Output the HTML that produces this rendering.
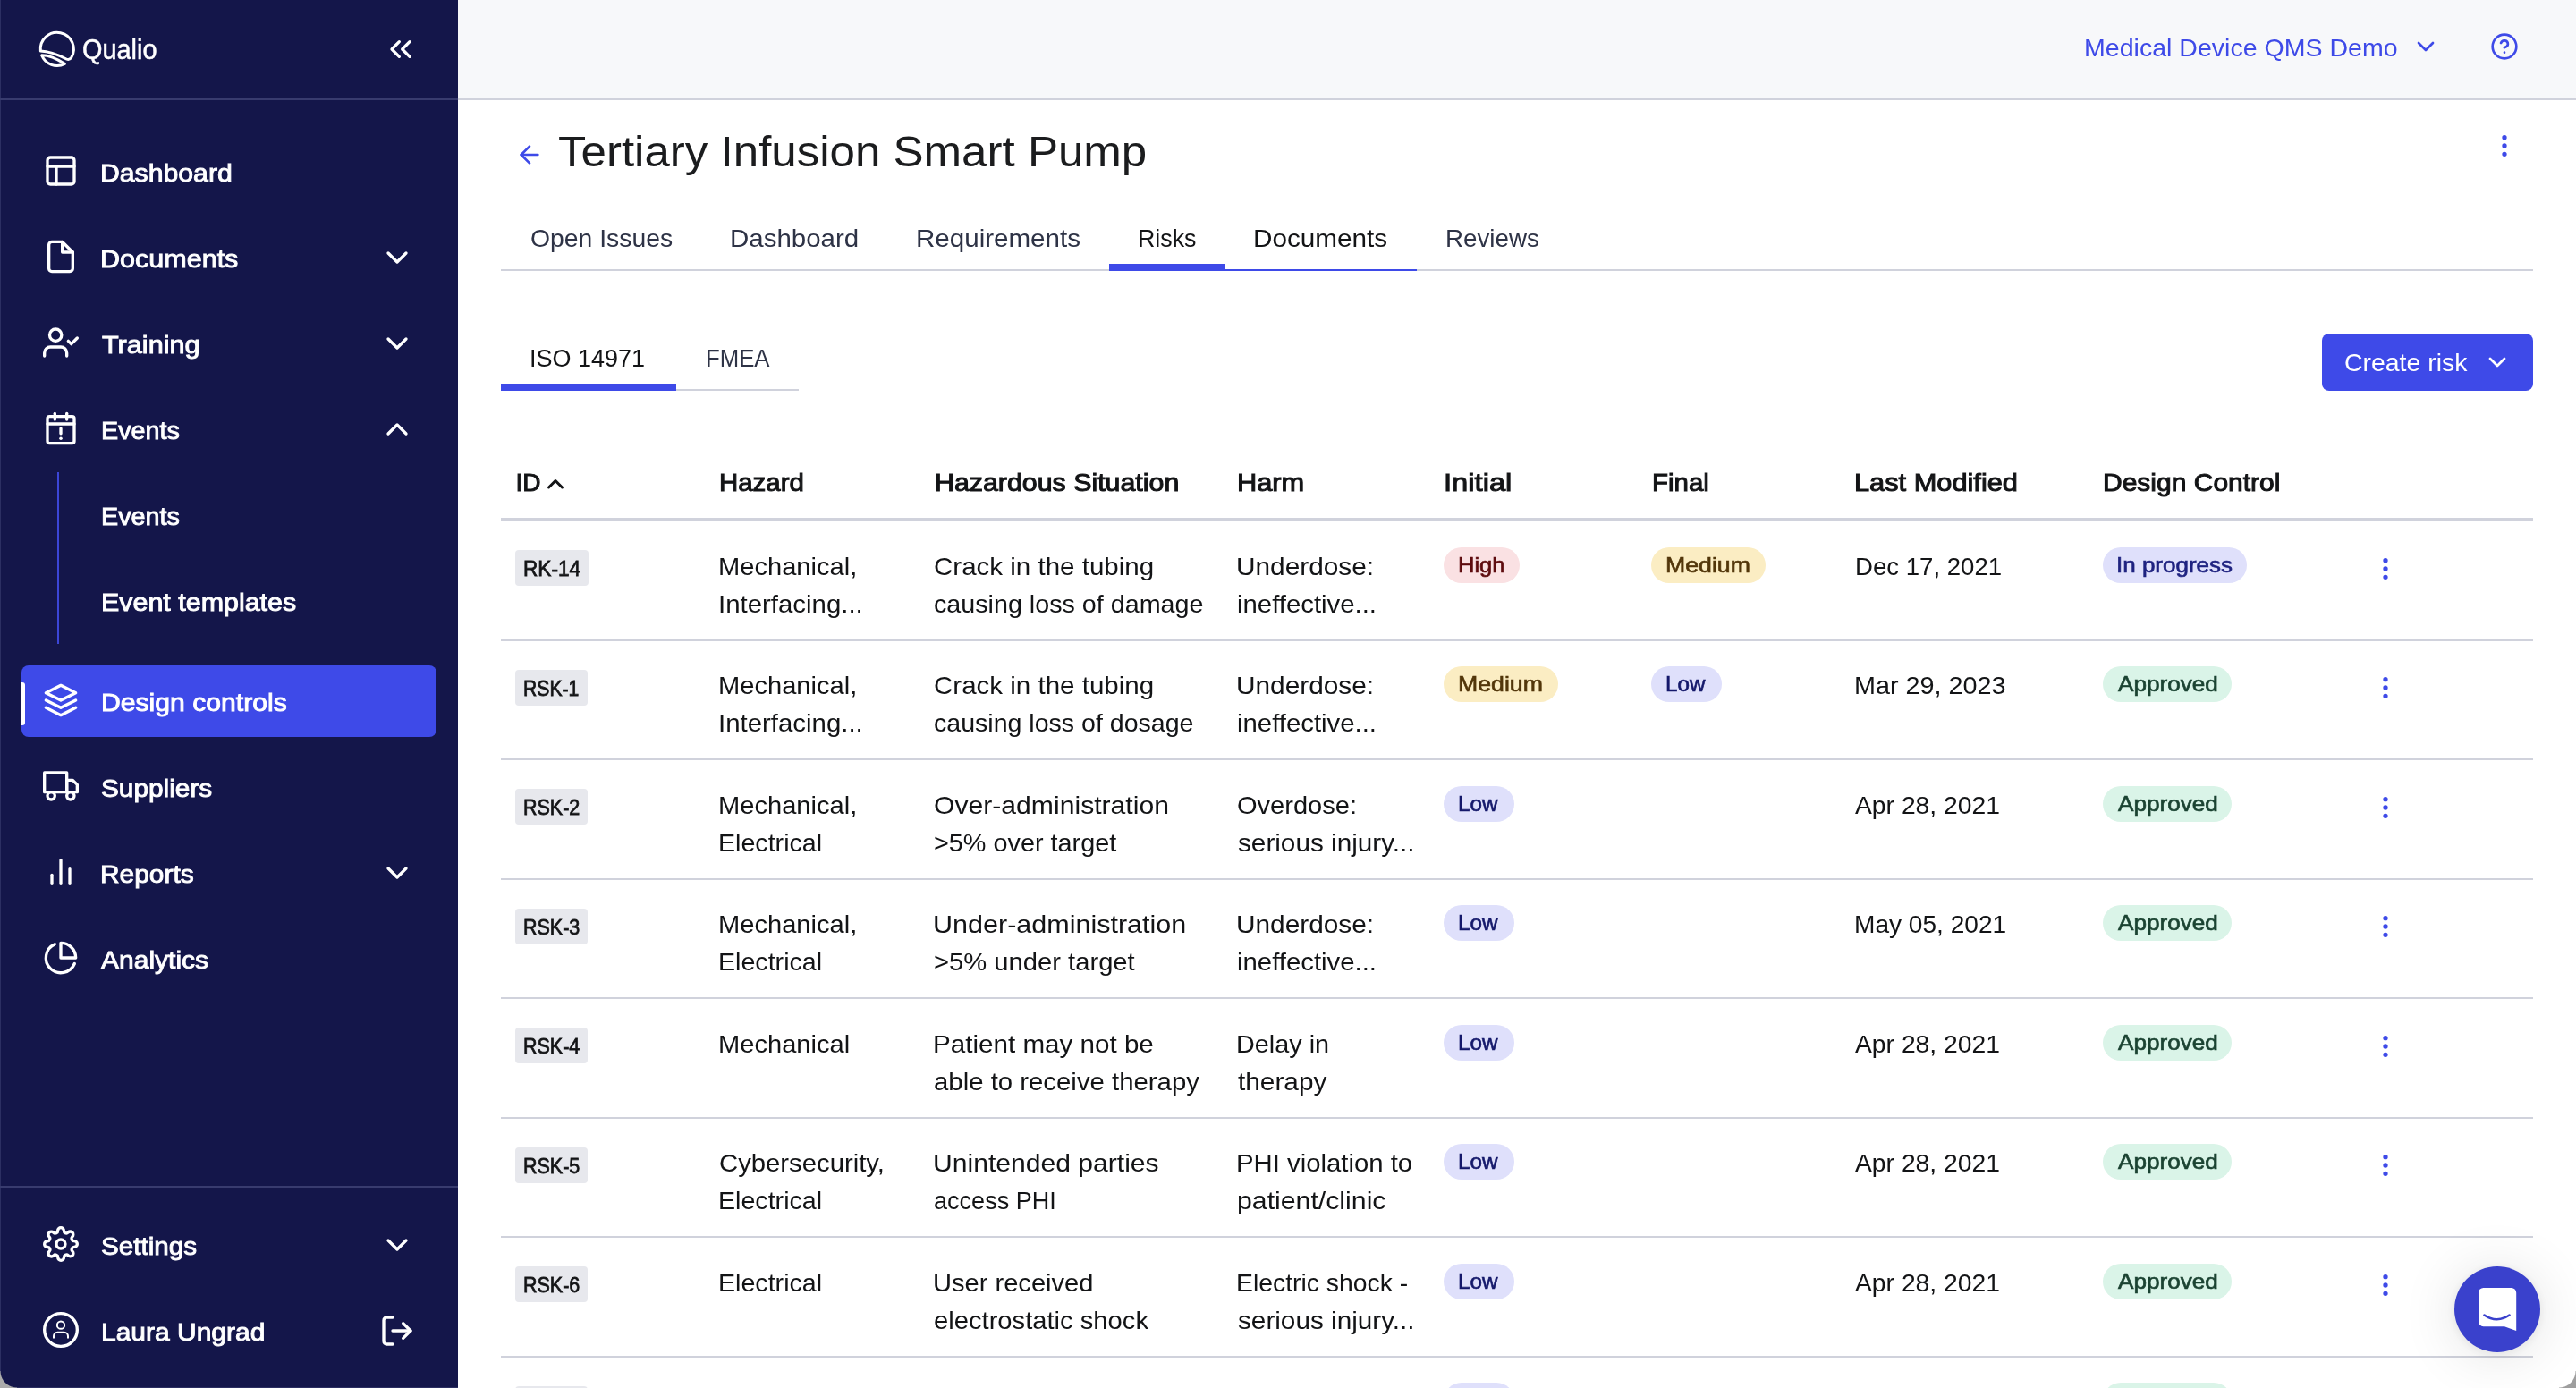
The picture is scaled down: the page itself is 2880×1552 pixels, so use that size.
<!DOCTYPE html><html lang="en"><head><meta charset="utf-8"><title>Tertiary Infusion Smart Pump - Risks</title><style>
*{margin:0;padding:0;box-sizing:border-box}
html,body{width:2880px;height:1552px;overflow:hidden;background:#fff}
body{position:relative;font-family:"Liberation Sans", sans-serif;-webkit-font-smoothing:antialiased}
@media (max-width:1600px){html{zoom:.5}}
.t{position:absolute;white-space:nowrap;font-weight:400;display:block;transform-origin:0 50%}
.i{position:absolute;display:block;overflow:visible}
aside{position:absolute;left:0;top:0;width:512px;height:1552px;background:#14164A;will-change:transform;box-shadow:inset 1px 0 0 #2C2F62,inset 0 -1px 0 #2C2F62}
aside .hl{position:absolute;left:0;width:512px;height:2px;background:#383B6E}
aside .act{position:absolute;left:24px;top:744px;width:464px;height:80px;border-radius:8px;background:#3E4AE8}
aside .bar{position:absolute;left:24px;top:763px;width:4px;height:48px;border-radius:0 3px 3px 0;background:#fff}
aside .vl{position:absolute;left:64px;top:528px;width:2px;height:192px;background:#3C46D8}
header{position:absolute;left:512px;top:0;width:2368px;height:112px;background:#F7F8FA;border-bottom:2px solid #D0D2DC}
main{position:absolute;left:0;top:0;width:2880px;height:1552px;overflow:hidden;will-change:transform}
.ln{position:absolute;height:2px;background:#D0D2DC}
.bl{position:absolute;background:#3E4AE8}
.btn{position:absolute;left:2596px;top:373px;width:236px;height:64px;border-radius:8px;background:#3E4AE8}
.sep{position:absolute;left:560px;width:2272px;height:2px;background:#D0D2DC}
.idb{position:absolute;height:40px;border-radius:4px;background:#E7E8ED}
.pill{position:absolute;height:40px;border-radius:20px}
.cnr{position:absolute;bottom:0;width:19px;height:19px}
.chat{position:absolute;left:2744px;top:1416px;width:96px;height:96px;border-radius:50%;background:#3A41CC;box-shadow:0 2px 12px rgba(0,0,0,.08),0 4px 64px rgba(0,0,0,.12)}
</style></head><body>
<header></header>
<main>
<div class="btn"></div>
<svg class="i" style="left:2696px;top:36px" width="32" height="32" viewBox="0 0 24 24" fill="none" stroke="#3E4AE8" stroke-width="2" stroke-linecap="round" stroke-linejoin="round"><polyline points="6 9 12 15 18 9"/></svg>
<svg class="i" style="left:2784px;top:36px" width="32" height="32" viewBox="0 0 24 24" fill="none" stroke="#3E4AE8" stroke-width="2" stroke-linecap="round" stroke-linejoin="round"><circle cx="12" cy="12" r="10"/><path d="M9.090 9a3 3 0 0 1 5.830 1c0 2-3 3-3 3"/><line x1="12" y1="17" x2="12.010" y2="17"/></svg>
<svg class="i" style="left:576px;top:157px" width="32" height="32" viewBox="0 0 24 24" fill="none" stroke="#3E4AE8" stroke-width="2" stroke-linecap="round" stroke-linejoin="round"><line x1="19" y1="12" x2="5" y2="12"/><polyline points="12 19 5 12 12 5"/></svg>
<svg class="i" style="left:2784px;top:147px" width="32" height="32" viewBox="0 0 24 24" fill="#3E4AE8" stroke="#3E4AE8" stroke-width="2" stroke-linecap="round" stroke-linejoin="round"><circle cx="12" cy="5" r="1"/><circle cx="12" cy="12" r="1"/><circle cx="12" cy="19" r="1"/></svg>
<svg class="i" style="left:2776px;top:389px" width="32" height="32" viewBox="0 0 24 24" fill="none" stroke="#fff" stroke-width="2" stroke-linecap="round" stroke-linejoin="round"><polyline points="6 9 12 15 18 9"/></svg>
<svg class="i" style="left:608px;top:525px" width="26" height="32" viewBox="0 0 26 32" fill="none" stroke="#131416" stroke-width="3" stroke-linecap="round" stroke-linejoin="round"><polyline points="5.500 20 13 12.500 20.500 20"/></svg>
<span class="t" style="left:2330.06px;top:37.60px;font-size:28px;line-height:31px;color:#3E4AE8;transform:scaleX(1.0196);">Medical Device QMS Demo</span>
<h1 class="t" style="left:624.14px;top:143.20px;font-size:48px;line-height:53px;color:#1B1C1E;transform:scaleX(1.0636);">Tertiary Infusion Smart Pump</h1>
<span class="t" style="left:592.89px;top:251.40px;font-size:28px;line-height:31px;color:#2E3346;transform:scaleX(1.0122);">Open Issues</span>
<span class="t" style="left:816.30px;top:251.40px;font-size:28px;line-height:31px;color:#2E3346;transform:scaleX(1.0524);">Dashboard</span>
<span class="t" style="left:1024.49px;top:251.40px;font-size:28px;line-height:31px;color:#2E3346;transform:scaleX(1.0554);">Requirements</span>
<span class="t" style="left:1272.49px;top:251.40px;font-size:28px;line-height:31px;color:#131416;transform:scaleX(0.9566);">Risks</span>
<span class="t" style="left:1401.48px;top:251.40px;font-size:28px;line-height:31px;color:#131416;transform:scaleX(1.0605);">Documents</span>
<span class="t" style="left:1616.22px;top:251.40px;font-size:28px;line-height:31px;color:#2E3346;transform:scaleX(0.9902);">Reviews</span>
<span class="t" style="left:592.17px;top:385.20px;font-size:28px;line-height:31px;color:#131416;transform:scaleX(0.9627);">ISO 14971</span>
<span class="t" style="left:788.96px;top:385.20px;font-size:28px;line-height:31px;color:#2E3346;transform:scaleX(0.9198);">FMEA</span>
<span class="t" style="left:2621.08px;top:390.00px;font-size:28px;line-height:31px;color:#fff;transform:scaleX(1.0150);">Create risk</span>
<span class="t" style="left:576.50px;top:524.00px;font-size:28px;line-height:31px;color:#131416;-webkit-text-stroke:1.0px;">ID</span>
<span class="t" style="left:804.30px;top:524.00px;font-size:28px;line-height:31px;color:#131416;transform:scaleX(1.0509);-webkit-text-stroke:1.0px;">Hazard</span>
<span class="t" style="left:1044.53px;top:524.00px;font-size:28px;line-height:31px;color:#131416;transform:scaleX(1.0838);-webkit-text-stroke:1.0px;">Hazardous Situation</span>
<span class="t" style="left:1382.70px;top:524.00px;font-size:28px;line-height:31px;color:#131416;transform:scaleX(1.0996);-webkit-text-stroke:1.0px;">Harm</span>
<span class="t" style="left:1614.26px;top:524.00px;font-size:28px;line-height:31px;color:#131416;transform:scaleX(1.1682);-webkit-text-stroke:1.0px;">Initial</span>
<span class="t" style="left:1846.80px;top:524.00px;font-size:28px;line-height:31px;color:#131416;transform:scaleX(1.0510);-webkit-text-stroke:1.0px;">Final</span>
<span class="t" style="left:2073.30px;top:524.00px;font-size:28px;line-height:31px;color:#131416;transform:scaleX(1.0984);-webkit-text-stroke:1.0px;">Last Modified</span>
<span class="t" style="left:2350.96px;top:524.00px;font-size:28px;line-height:31px;color:#131416;transform:scaleX(1.0716);-webkit-text-stroke:1.0px;">Design Control</span>
<div class="ln" style="left:560px;top:301px;width:2272px"></div>
<div class="bl" style="left:1240px;top:295px;width:130px;height:8px"></div>
<div class="bl" style="left:1370px;top:301px;width:214px;height:2px"></div>
<div class="ln" style="left:560px;top:435px;width:333px"></div>
<div class="bl" style="left:560px;top:429px;width:196px;height:8px"></div>
<div class="ln" style="left:560px;top:579px;width:2272px;height:4px"></div>
<section class="row" id="row0"><div class="sep" style="top:715.0px"></div>
<div class="idb" style="left:576px;top:615px;width:82px"></div>
<div class="pill" style="left:1614px;top:612.0px;width:85.0px;background:#FAE1E3"></div>
<div class="pill" style="left:1846px;top:612.0px;width:128.0px;background:#FBEDC3"></div>
<div class="pill" style="left:2350.7px;top:612.0px;width:161.0px;background:#DFE0FB"></div>
<svg class="i" style="left:2650.7px;top:619.7px" width="32" height="32" viewBox="0 0 24 24" fill="#3E4AE8" stroke="#3E4AE8" stroke-width="2" stroke-linecap="round" stroke-linejoin="round"><circle cx="12" cy="5" r="1"/><circle cx="12" cy="12" r="1"/><circle cx="12" cy="19" r="1"/></svg><span class="t" style="left:584.86px;top:622.00px;font-size:24px;line-height:27px;color:#131416;transform:scaleX(0.9433);-webkit-text-stroke:0.8px;">RK-14</span>
<span class="t" style="left:803.42px;top:618.00px;font-size:28px;line-height:31px;color:#131416;transform:scaleX(1.0396);">Mechanical,</span>
<span class="t" style="left:803.40px;top:660.00px;font-size:28px;line-height:31px;color:#131416;transform:scaleX(1.0499);">Interfacing...</span>
<span class="t" style="left:1044.25px;top:618.00px;font-size:28px;line-height:31px;color:#131416;transform:scaleX(1.0542);">Crack in the tubing</span>
<span class="t" style="left:1044.28px;top:660.00px;font-size:28px;line-height:31px;color:#131416;transform:scaleX(1.0246);">causing loss of damage</span>
<span class="t" style="left:1381.77px;top:618.00px;font-size:28px;line-height:31px;color:#131416;transform:scaleX(1.0640);">Underdose:</span>
<span class="t" style="left:1382.75px;top:660.00px;font-size:28px;line-height:31px;color:#131416;transform:scaleX(1.0478);">ineffective...</span>
<span class="t" style="left:1630.06px;top:618.00px;font-size:24px;line-height:27px;color:#5E0B0E;transform:scaleX(1.0604);-webkit-text-stroke:0.65px;">High</span>
<span class="t" style="left:1862.01px;top:618.00px;font-size:24px;line-height:27px;color:#52360A;transform:scaleX(1.1113);-webkit-text-stroke:0.65px;">Medium</span>
<span class="t" style="left:2365.66px;top:618.00px;font-size:24px;line-height:27px;color:#1F2380;transform:scaleX(1.0829);-webkit-text-stroke:0.65px;">In progress</span>
<span class="t" style="left:2073.63px;top:618.00px;font-size:28px;line-height:31px;color:#131416;transform:scaleX(0.9854);">Dec 17, 2021</span></section>
<section class="row" id="row1"><div class="sep" style="top:848.0px"></div>
<div class="idb" style="left:576px;top:749px;width:81px"></div>
<div class="pill" style="left:1614px;top:745.0px;width:128.0px;background:#FBEDC3"></div>
<div class="pill" style="left:1846px;top:745.0px;width:79.0px;background:#DFE0FB"></div>
<div class="pill" style="left:2350.7px;top:745.0px;width:144.0px;background:#DAF4E8"></div>
<svg class="i" style="left:2650.7px;top:752.7px" width="32" height="32" viewBox="0 0 24 24" fill="#3E4AE8" stroke="#3E4AE8" stroke-width="2" stroke-linecap="round" stroke-linejoin="round"><circle cx="12" cy="5" r="1"/><circle cx="12" cy="12" r="1"/><circle cx="12" cy="19" r="1"/></svg><span class="t" style="left:584.92px;top:756.00px;font-size:24px;line-height:27px;color:#131416;transform:scaleX(0.8812);-webkit-text-stroke:0.8px;">RSK-1</span>
<span class="t" style="left:803.42px;top:751.00px;font-size:28px;line-height:31px;color:#131416;transform:scaleX(1.0396);">Mechanical,</span>
<span class="t" style="left:803.40px;top:793.00px;font-size:28px;line-height:31px;color:#131416;transform:scaleX(1.0499);">Interfacing...</span>
<span class="t" style="left:1044.25px;top:751.00px;font-size:28px;line-height:31px;color:#131416;transform:scaleX(1.0542);">Crack in the tubing</span>
<span class="t" style="left:1044.28px;top:793.00px;font-size:28px;line-height:31px;color:#131416;transform:scaleX(1.0195);">causing loss of dosage</span>
<span class="t" style="left:1381.77px;top:751.00px;font-size:28px;line-height:31px;color:#131416;transform:scaleX(1.0640);">Underdose:</span>
<span class="t" style="left:1382.75px;top:793.00px;font-size:28px;line-height:31px;color:#131416;transform:scaleX(1.0478);">ineffective...</span>
<span class="t" style="left:1630.01px;top:751.00px;font-size:24px;line-height:27px;color:#52360A;transform:scaleX(1.1113);-webkit-text-stroke:0.65px;">Medium</span>
<span class="t" style="left:1862.12px;top:751.00px;font-size:24px;line-height:27px;color:#15196B;transform:scaleX(1.0081);-webkit-text-stroke:0.65px;">Low</span>
<span class="t" style="left:2367.82px;top:751.00px;font-size:24px;line-height:27px;color:#1B4332;transform:scaleX(1.0884);-webkit-text-stroke:0.65px;">Approved</span>
<span class="t" style="left:2073.05px;top:751.00px;font-size:28px;line-height:31px;color:#131416;transform:scaleX(1.0270);">Mar 29, 2023</span></section>
<section class="row" id="row2"><div class="sep" style="top:982.0px"></div>
<div class="idb" style="left:576px;top:882px;width:81px"></div>
<div class="pill" style="left:1614px;top:879.0px;width:79.0px;background:#DFE0FB"></div>
<div class="pill" style="left:2350.7px;top:879.0px;width:144.0px;background:#DAF4E8"></div>
<svg class="i" style="left:2650.7px;top:886.7px" width="32" height="32" viewBox="0 0 24 24" fill="#3E4AE8" stroke="#3E4AE8" stroke-width="2" stroke-linecap="round" stroke-linejoin="round"><circle cx="12" cy="5" r="1"/><circle cx="12" cy="12" r="1"/><circle cx="12" cy="19" r="1"/></svg><span class="t" style="left:584.90px;top:889.00px;font-size:24px;line-height:27px;color:#131416;transform:scaleX(0.8956);-webkit-text-stroke:0.8px;">RSK-2</span>
<span class="t" style="left:803.42px;top:885.00px;font-size:28px;line-height:31px;color:#131416;transform:scaleX(1.0396);">Mechanical,</span>
<span class="t" style="left:803.46px;top:927.00px;font-size:28px;line-height:31px;color:#131416;transform:scaleX(1.0221);">Electrical</span>
<span class="t" style="left:1044.22px;top:885.00px;font-size:28px;line-height:31px;color:#131416;transform:scaleX(1.0764);">Over-administration</span>
<span class="t" style="left:1044.27px;top:927.00px;font-size:28px;line-height:31px;color:#131416;transform:scaleX(1.0290);">&gt;5% over target</span>
<span class="t" style="left:1382.86px;top:885.00px;font-size:28px;line-height:31px;color:#131416;transform:scaleX(1.0372);">Overdose:</span>
<span class="t" style="left:1383.90px;top:927.00px;font-size:28px;line-height:31px;color:#131416;transform:scaleX(1.0611);">serious injury...</span>
<span class="t" style="left:1630.12px;top:885.00px;font-size:24px;line-height:27px;color:#15196B;transform:scaleX(1.0081);-webkit-text-stroke:0.65px;">Low</span>
<span class="t" style="left:2367.82px;top:885.00px;font-size:24px;line-height:27px;color:#1B4332;transform:scaleX(1.0884);-webkit-text-stroke:0.65px;">Approved</span>
<span class="t" style="left:2073.80px;top:885.00px;font-size:28px;line-height:31px;color:#131416;transform:scaleX(1.0102);">Apr 28, 2021</span></section>
<section class="row" id="row3"><div class="sep" style="top:1115.0px"></div>
<div class="idb" style="left:576px;top:1016px;width:81px"></div>
<div class="pill" style="left:1614px;top:1012.0px;width:79.0px;background:#DFE0FB"></div>
<div class="pill" style="left:2350.7px;top:1012.0px;width:144.0px;background:#DAF4E8"></div>
<svg class="i" style="left:2650.7px;top:1019.7px" width="32" height="32" viewBox="0 0 24 24" fill="#3E4AE8" stroke="#3E4AE8" stroke-width="2" stroke-linecap="round" stroke-linejoin="round"><circle cx="12" cy="5" r="1"/><circle cx="12" cy="12" r="1"/><circle cx="12" cy="19" r="1"/></svg><span class="t" style="left:584.90px;top:1023.00px;font-size:24px;line-height:27px;color:#131416;transform:scaleX(0.8956);-webkit-text-stroke:0.8px;">RSK-3</span>
<span class="t" style="left:803.42px;top:1018.00px;font-size:28px;line-height:31px;color:#131416;transform:scaleX(1.0396);">Mechanical,</span>
<span class="t" style="left:803.46px;top:1060.00px;font-size:28px;line-height:31px;color:#131416;transform:scaleX(1.0221);">Electrical</span>
<span class="t" style="left:1043.12px;top:1018.00px;font-size:28px;line-height:31px;color:#131416;transform:scaleX(1.0901);">Under-administration</span>
<span class="t" style="left:1044.26px;top:1060.00px;font-size:28px;line-height:31px;color:#131416;transform:scaleX(1.0423);">&gt;5% under target</span>
<span class="t" style="left:1381.77px;top:1018.00px;font-size:28px;line-height:31px;color:#131416;transform:scaleX(1.0640);">Underdose:</span>
<span class="t" style="left:1382.75px;top:1060.00px;font-size:28px;line-height:31px;color:#131416;transform:scaleX(1.0478);">ineffective...</span>
<span class="t" style="left:1630.12px;top:1018.00px;font-size:24px;line-height:27px;color:#15196B;transform:scaleX(1.0081);-webkit-text-stroke:0.65px;">Low</span>
<span class="t" style="left:2367.82px;top:1018.00px;font-size:24px;line-height:27px;color:#1B4332;transform:scaleX(1.0884);-webkit-text-stroke:0.65px;">Approved</span>
<span class="t" style="left:2072.89px;top:1018.00px;font-size:28px;line-height:31px;color:#131416;transform:scaleX(1.0030);">May 05, 2021</span></section>
<section class="row" id="row4"><div class="sep" style="top:1249.0px"></div>
<div class="idb" style="left:576px;top:1149px;width:81px"></div>
<div class="pill" style="left:1614px;top:1146.0px;width:79.0px;background:#DFE0FB"></div>
<div class="pill" style="left:2350.7px;top:1146.0px;width:144.0px;background:#DAF4E8"></div>
<svg class="i" style="left:2650.7px;top:1153.7px" width="32" height="32" viewBox="0 0 24 24" fill="#3E4AE8" stroke="#3E4AE8" stroke-width="2" stroke-linecap="round" stroke-linejoin="round"><circle cx="12" cy="5" r="1"/><circle cx="12" cy="12" r="1"/><circle cx="12" cy="19" r="1"/></svg><span class="t" style="left:584.90px;top:1156.00px;font-size:24px;line-height:27px;color:#131416;transform:scaleX(0.8956);-webkit-text-stroke:0.8px;">RSK-4</span>
<span class="t" style="left:803.42px;top:1152.00px;font-size:28px;line-height:31px;color:#131416;transform:scaleX(1.0390);">Mechanical</span>
<span class="t" style="left:1043.19px;top:1152.00px;font-size:28px;line-height:31px;color:#131416;transform:scaleX(1.0572);">Patient may not be</span>
<span class="t" style="left:1044.25px;top:1194.00px;font-size:28px;line-height:31px;color:#131416;transform:scaleX(1.0482);">able to receive therapy</span>
<span class="t" style="left:1382.34px;top:1152.00px;font-size:28px;line-height:31px;color:#131416;transform:scaleX(1.0288);">Delay in</span>
<span class="t" style="left:1383.90px;top:1194.00px;font-size:28px;line-height:31px;color:#131416;transform:scaleX(1.0643);">therapy</span>
<span class="t" style="left:1630.12px;top:1152.00px;font-size:24px;line-height:27px;color:#15196B;transform:scaleX(1.0081);-webkit-text-stroke:0.65px;">Low</span>
<span class="t" style="left:2367.82px;top:1152.00px;font-size:24px;line-height:27px;color:#1B4332;transform:scaleX(1.0884);-webkit-text-stroke:0.65px;">Approved</span>
<span class="t" style="left:2073.80px;top:1152.00px;font-size:28px;line-height:31px;color:#131416;transform:scaleX(1.0102);">Apr 28, 2021</span></section>
<section class="row" id="row5"><div class="sep" style="top:1382.0px"></div>
<div class="idb" style="left:576px;top:1283px;width:81px"></div>
<div class="pill" style="left:1614px;top:1279.0px;width:79.0px;background:#DFE0FB"></div>
<div class="pill" style="left:2350.7px;top:1279.0px;width:144.0px;background:#DAF4E8"></div>
<svg class="i" style="left:2650.7px;top:1286.7px" width="32" height="32" viewBox="0 0 24 24" fill="#3E4AE8" stroke="#3E4AE8" stroke-width="2" stroke-linecap="round" stroke-linejoin="round"><circle cx="12" cy="5" r="1"/><circle cx="12" cy="12" r="1"/><circle cx="12" cy="19" r="1"/></svg><span class="t" style="left:584.90px;top:1290.00px;font-size:24px;line-height:27px;color:#131416;transform:scaleX(0.8956);-webkit-text-stroke:0.8px;">RSK-5</span>
<span class="t" style="left:804.45px;top:1285.00px;font-size:28px;line-height:31px;color:#131416;transform:scaleX(1.0455);">Cybersecurity,</span>
<span class="t" style="left:803.46px;top:1327.00px;font-size:28px;line-height:31px;color:#131416;transform:scaleX(1.0221);">Electrical</span>
<span class="t" style="left:1043.15px;top:1285.00px;font-size:28px;line-height:31px;color:#131416;transform:scaleX(1.0748);">Unintended parties</span>
<span class="t" style="left:1044.33px;top:1327.00px;font-size:28px;line-height:31px;color:#131416;transform:scaleX(0.9660);">access PHI</span>
<span class="t" style="left:1382.31px;top:1285.00px;font-size:28px;line-height:31px;color:#131416;transform:scaleX(1.0466);">PHI violation to</span>
<span class="t" style="left:1383.32px;top:1327.00px;font-size:28px;line-height:31px;color:#131416;transform:scaleX(1.0805);">patient/clinic</span>
<span class="t" style="left:1630.12px;top:1285.00px;font-size:24px;line-height:27px;color:#15196B;transform:scaleX(1.0081);-webkit-text-stroke:0.65px;">Low</span>
<span class="t" style="left:2367.82px;top:1285.00px;font-size:24px;line-height:27px;color:#1B4332;transform:scaleX(1.0884);-webkit-text-stroke:0.65px;">Approved</span>
<span class="t" style="left:2073.80px;top:1285.00px;font-size:28px;line-height:31px;color:#131416;transform:scaleX(1.0102);">Apr 28, 2021</span></section>
<section class="row" id="row6"><div class="sep" style="top:1516.0px"></div>
<div class="idb" style="left:576px;top:1416px;width:81px"></div>
<div class="pill" style="left:1614px;top:1413.0px;width:79.0px;background:#DFE0FB"></div>
<div class="pill" style="left:2350.7px;top:1413.0px;width:144.0px;background:#DAF4E8"></div>
<svg class="i" style="left:2650.7px;top:1420.7px" width="32" height="32" viewBox="0 0 24 24" fill="#3E4AE8" stroke="#3E4AE8" stroke-width="2" stroke-linecap="round" stroke-linejoin="round"><circle cx="12" cy="5" r="1"/><circle cx="12" cy="12" r="1"/><circle cx="12" cy="19" r="1"/></svg><span class="t" style="left:584.90px;top:1423.00px;font-size:24px;line-height:27px;color:#131416;transform:scaleX(0.8956);-webkit-text-stroke:0.8px;">RSK-6</span>
<span class="t" style="left:803.46px;top:1419.00px;font-size:28px;line-height:31px;color:#131416;transform:scaleX(1.0221);">Electrical</span>
<span class="t" style="left:1043.22px;top:1419.00px;font-size:28px;line-height:31px;color:#131416;transform:scaleX(1.0387);">User received</span>
<span class="t" style="left:1044.26px;top:1461.00px;font-size:28px;line-height:31px;color:#131416;transform:scaleX(1.0420);">electrostatic shock</span>
<span class="t" style="left:1382.38px;top:1419.00px;font-size:28px;line-height:31px;color:#131416;transform:scaleX(1.0123);">Electric shock -</span>
<span class="t" style="left:1383.90px;top:1461.00px;font-size:28px;line-height:31px;color:#131416;transform:scaleX(1.0611);">serious injury...</span>
<span class="t" style="left:1630.12px;top:1419.00px;font-size:24px;line-height:27px;color:#15196B;transform:scaleX(1.0081);-webkit-text-stroke:0.65px;">Low</span>
<span class="t" style="left:2367.82px;top:1419.00px;font-size:24px;line-height:27px;color:#1B4332;transform:scaleX(1.0884);-webkit-text-stroke:0.65px;">Approved</span>
<span class="t" style="left:2073.80px;top:1419.00px;font-size:28px;line-height:31px;color:#131416;transform:scaleX(1.0102);">Apr 28, 2021</span></section>
<section class="row" id="row7"><div class="sep" style="top:1649.0px"></div>
<div class="idb" style="left:576px;top:1550px;width:81px"></div>
<div class="pill" style="left:1614px;top:1546.0px;width:79.0px;background:#DFE0FB"></div>
<div class="pill" style="left:2350.7px;top:1546.0px;width:144.0px;background:#DAF4E8"></div>
<svg class="i" style="left:2650.7px;top:1553.7px" width="32" height="32" viewBox="0 0 24 24" fill="#3E4AE8" stroke="#3E4AE8" stroke-width="2" stroke-linecap="round" stroke-linejoin="round"><circle cx="12" cy="5" r="1"/><circle cx="12" cy="12" r="1"/><circle cx="12" cy="19" r="1"/></svg><span class="t" style="left:584.90px;top:1557.00px;font-size:24px;line-height:27px;color:#131416;transform:scaleX(0.8956);-webkit-text-stroke:0.8px;">RSK-7</span>
<span class="t" style="left:1630.12px;top:1552.00px;font-size:24px;line-height:27px;color:#15196B;transform:scaleX(1.0081);-webkit-text-stroke:0.65px;">Low</span>
<span class="t" style="left:2367.82px;top:1552.00px;font-size:24px;line-height:27px;color:#1B4332;transform:scaleX(1.0884);-webkit-text-stroke:0.65px;">Approved</span></section>
<div class="chat"><svg class="i" style="left:24px;top:22px" width="48" height="52" viewBox="0 0 48 52"><path d="M8.500 2h31.200a5.500 5.500 0 0 1 5.500 5.500V50L32 45.200H8.500A5.500 5.500 0 0 1 3 39.700V7.500A5.500 5.500 0 0 1 8.500 2Z" fill="#fff"/><path d="M9.500 32.500Q23.200 42 37.500 32.500" fill="none" stroke="#3A41CC" stroke-width="2.600" stroke-linecap="round"/></svg></div>
</main>
<aside><div class="hl" style="top:110px"></div><div class="hl" style="top:1326px"></div><div class="act"></div><div class="bar"></div><div class="vl"></div>
<svg class="i" style="left:44px;top:35px" width="40" height="40" viewBox="0 0 40 40" fill="none" stroke="#fff" stroke-width="3" stroke-linejoin="round" stroke-linecap="round"><path d="M1.370 22A18.550 18.550 0 1 1 35.780 29.310C34.500 31.300 32.400 32 30.200 31C22 26.800 10 22.200 1.370 22Z"/><path d="M2.580 26.790C10 26.700 17.300 29.300 28.390 36.340A18.550 18.550 0 0 1 2.580 26.790Z"/></svg>
<svg class="i" style="left:428px;top:35px" width="40" height="40" viewBox="0 0 24 24" fill="none" stroke="#fff" stroke-width="2" stroke-linecap="round" stroke-linejoin="round"><polyline points="11 17 6 12 11 7"/><polyline points="18 17 13 12 18 7"/></svg>
<svg class="i" style="left:48px;top:171px" width="40" height="40" viewBox="0 0 24 24" fill="none" stroke="#fff" stroke-width="2" stroke-linecap="round" stroke-linejoin="round"><rect x="3" y="3" width="18" height="18" rx="2" ry="2"/><line x1="3" y1="9" x2="21" y2="9"/><line x1="9" y1="21" x2="9" y2="9"/></svg>
<svg class="i" style="left:48px;top:267px" width="40" height="40" viewBox="0 0 24 24" fill="none" stroke="#fff" stroke-width="2" stroke-linecap="round" stroke-linejoin="round"><path d="M13 2H6a2 2 0 0 0-2 2v16a2 2 0 0 0 2 2h12a2 2 0 0 0 2-2V9z"/><polyline points="13 2 13 9 20 9"/></svg>
<svg class="i" style="left:424px;top:268px" width="40" height="40" viewBox="0 0 24 24" fill="none" stroke="#fff" stroke-width="2" stroke-linecap="round" stroke-linejoin="round"><polyline points="6 9 12 15 18 9"/></svg>
<svg class="i" style="left:48px;top:363px" width="40" height="40" viewBox="0 0 24 24" fill="none" stroke="#fff" stroke-width="2" stroke-linecap="round" stroke-linejoin="round"><path d="M16 21v-2a4 4 0 0 0-4-4H5a4 4 0 0 0-4 4v2"/><circle cx="8.500" cy="7" r="4"/><polyline points="17 11 19 13 23 9"/></svg>
<svg class="i" style="left:424px;top:364px" width="40" height="40" viewBox="0 0 24 24" fill="none" stroke="#fff" stroke-width="2" stroke-linecap="round" stroke-linejoin="round"><polyline points="6 9 12 15 18 9"/></svg>
<svg class="i" style="left:48px;top:459px" width="40" height="40" viewBox="0 0 24 24" fill="none" stroke="#fff" stroke-width="2" stroke-linecap="round" stroke-linejoin="round"><rect x="3" y="4" width="18" height="18" rx="1.400" ry="1.400"/><line x1="16" y1="2" x2="16" y2="6"/><line x1="8" y1="2" x2="8" y2="6"/><line x1="3" y1="9" x2="21" y2="9"/><line x1="12" y1="12" x2="12" y2="15.500" stroke-width="2"/><line x1="12" y1="18.750" x2="12" y2="18.760" stroke-width="2.100"/></svg>
<svg class="i" style="left:424px;top:460px" width="40" height="40" viewBox="0 0 24 24" fill="none" stroke="#fff" stroke-width="2" stroke-linecap="round" stroke-linejoin="round"><polyline points="18 15 12 9 6 15"/></svg>
<svg class="i" style="left:48px;top:763px" width="40" height="40" viewBox="0 0 24 24" fill="none" stroke="#fff" stroke-width="2" stroke-linecap="round" stroke-linejoin="round"><polygon points="12 2 2 7 12 12 22 7 12 2"/><polyline points="2 17 12 22 22 17"/><polyline points="2 12 12 17 22 12"/></svg>
<svg class="i" style="left:48px;top:859px" width="40" height="40" viewBox="0 0 24 24" fill="none" stroke="#fff" stroke-width="2" stroke-linecap="round" stroke-linejoin="round"><rect x="1" y="3" width="15" height="13"/><polygon points="16 8 20 8 23 11 23 16 16 16 16 8"/><circle cx="5.500" cy="18.500" r="2.500"/><circle cx="18.500" cy="18.500" r="2.500"/></svg>
<svg class="i" style="left:48px;top:955px" width="40" height="40" viewBox="0 0 24 24" fill="none" stroke="#fff" stroke-width="2" stroke-linecap="round" stroke-linejoin="round"><line x1="18" y1="20" x2="18" y2="10"/><line x1="12" y1="20" x2="12" y2="4"/><line x1="6" y1="20" x2="6" y2="14"/></svg>
<svg class="i" style="left:424px;top:956px" width="40" height="40" viewBox="0 0 24 24" fill="none" stroke="#fff" stroke-width="2" stroke-linecap="round" stroke-linejoin="round"><polyline points="6 9 12 15 18 9"/></svg>
<svg class="i" style="left:48px;top:1051px" width="40" height="40" viewBox="0 0 24 24" fill="none" stroke="#fff" stroke-width="2" stroke-linecap="round" stroke-linejoin="round"><path d="M21.210 15.890A10 10 0 1 1 8 2.830"/><path d="M22 12A10 10 0 0 0 12 2v10z"/></svg>
<svg class="i" style="left:48px;top:1371px" width="40" height="40" viewBox="0 0 24 24" fill="none" stroke="#fff" stroke-width="2" stroke-linecap="round" stroke-linejoin="round"><circle cx="12" cy="12" r="3"/><path d="M19.400 15a1.650 1.650 0 0 0 .330 1.820l.060.060a2 2 0 0 1 0 2.830 2 2 0 0 1-2.830 0l-.060-.060a1.650 1.650 0 0 0-1.820-.330 1.650 1.650 0 0 0-1 1.510V21a2 2 0 0 1-2 2 2 2 0 0 1-2-2v-.090A1.650 1.650 0 0 0 9 19.400a1.650 1.650 0 0 0-1.820.330l-.060.060a2 2 0 0 1-2.830 0 2 2 0 0 1 0-2.830l.060-.060a1.650 1.650 0 0 0 .330-1.820 1.650 1.650 0 0 0-1.510-1H3a2 2 0 0 1-2-2 2 2 0 0 1 2-2h.090A1.650 1.650 0 0 0 4.600 9a1.650 1.650 0 0 0-.330-1.820l-.060-.060a2 2 0 0 1 0-2.830 2 2 0 0 1 2.830 0l.060.060a1.650 1.650 0 0 0 1.820.330H9a1.650 1.650 0 0 0 1-1.510V3a2 2 0 0 1 2-2 2 2 0 0 1 2 2v.090a1.650 1.650 0 0 0 1 1.510 1.650 1.650 0 0 0 1.820-.330l.060-.060a2 2 0 0 1 2.830 0 2 2 0 0 1 0 2.830l-.060.060a1.650 1.650 0 0 0-.330 1.820V9a1.650 1.650 0 0 0 1.510 1H21a2 2 0 0 1 2 2 2 2 0 0 1-2 2h-.090a1.650 1.650 0 0 0-1.510 1z"/></svg>
<svg class="i" style="left:424px;top:1372px" width="40" height="40" viewBox="0 0 24 24" fill="none" stroke="#fff" stroke-width="2" stroke-linecap="round" stroke-linejoin="round"><polyline points="6 9 12 15 18 9"/></svg>
<svg class="i" style="left:48px;top:1467px" width="40" height="40" viewBox="0 0 24 24" fill="none" stroke="#fff" stroke-width="2" stroke-linecap="round" stroke-linejoin="round"><circle cx="12" cy="12" r="11"/><circle cx="12" cy="8.800" r="2.500" stroke-width="1.200"/><path d="M7.200 17.200v-1a2.600 2.600 0 0 1 2.600-2.600h4.400a2.600 2.600 0 0 1 2.600 2.600v1" stroke-width="1.200"/></svg>
<svg class="i" style="left:424px;top:1468px" width="40" height="40" viewBox="0 0 24 24" fill="none" stroke="#fff" stroke-width="2" stroke-linecap="round" stroke-linejoin="round"><path d="M9 21H5a2 2 0 0 1-2-2V5a2 2 0 0 1 2-2h4"/><polyline points="16 17 21 12 16 7"/><line x1="21" y1="12" x2="9" y2="12"/></svg>
<span class="t" style="left:92.32px;top:37.50px;font-size:31px;line-height:35px;color:#fff;transform:scaleX(0.9317);-webkit-text-stroke:0.5px;">Qualio</span>
<span class="t" style="left:112.29px;top:178.00px;font-size:28px;line-height:31px;color:#fff;transform:scaleX(1.0787);-webkit-text-stroke:0.9px;">Dashboard</span>
<span class="t" style="left:112.27px;top:274.00px;font-size:28px;line-height:31px;color:#fff;transform:scaleX(1.0901);-webkit-text-stroke:0.9px;">Documents</span>
<span class="t" style="left:113.65px;top:370.00px;font-size:28px;line-height:31px;color:#fff;transform:scaleX(1.0949);-webkit-text-stroke:0.9px;">Training</span>
<span class="t" style="left:113.00px;top:466.00px;font-size:28px;line-height:31px;color:#fff;transform:scaleX(1.0254);-webkit-text-stroke:0.9px;">Events</span>
<span class="t" style="left:112.90px;top:770.00px;font-size:28px;line-height:31px;color:#fff;transform:scaleX(1.0764);-webkit-text-stroke:0.9px;">Design controls</span>
<span class="t" style="left:112.99px;top:866.00px;font-size:28px;line-height:31px;color:#fff;transform:scaleX(1.0642);-webkit-text-stroke:0.9px;">Suppliers</span>
<span class="t" style="left:112.31px;top:962.00px;font-size:28px;line-height:31px;color:#fff;transform:scaleX(1.0680);-webkit-text-stroke:0.9px;">Reports</span>
<span class="t" style="left:113.05px;top:1058.00px;font-size:28px;line-height:31px;color:#fff;transform:scaleX(1.0717);-webkit-text-stroke:0.9px;">Analytics</span>
<span class="t" style="left:112.99px;top:1378.00px;font-size:28px;line-height:31px;color:#fff;transform:scaleX(1.0578);-webkit-text-stroke:0.9px;">Settings</span>
<span class="t" style="left:112.91px;top:1474.00px;font-size:28px;line-height:31px;color:#fff;transform:scaleX(1.0707);-webkit-text-stroke:0.9px;">Laura Ungrad</span>
<span class="t" style="left:113.00px;top:562.00px;font-size:28px;line-height:31px;color:#fff;transform:scaleX(1.0254);-webkit-text-stroke:0.9px;">Events</span>
<span class="t" style="left:112.88px;top:658.00px;font-size:28px;line-height:31px;color:#fff;transform:scaleX(1.0866);-webkit-text-stroke:0.9px;">Event templates</span>
</aside>
<div class="cnr" style="left:0;background:radial-gradient(circle at 100% 0,transparent 18px,#ABABAB 19px)"></div><div class="cnr" style="right:0;background:radial-gradient(circle at 0 0,transparent 18px,#9E9E9E 19px)"></div>
</body></html>
